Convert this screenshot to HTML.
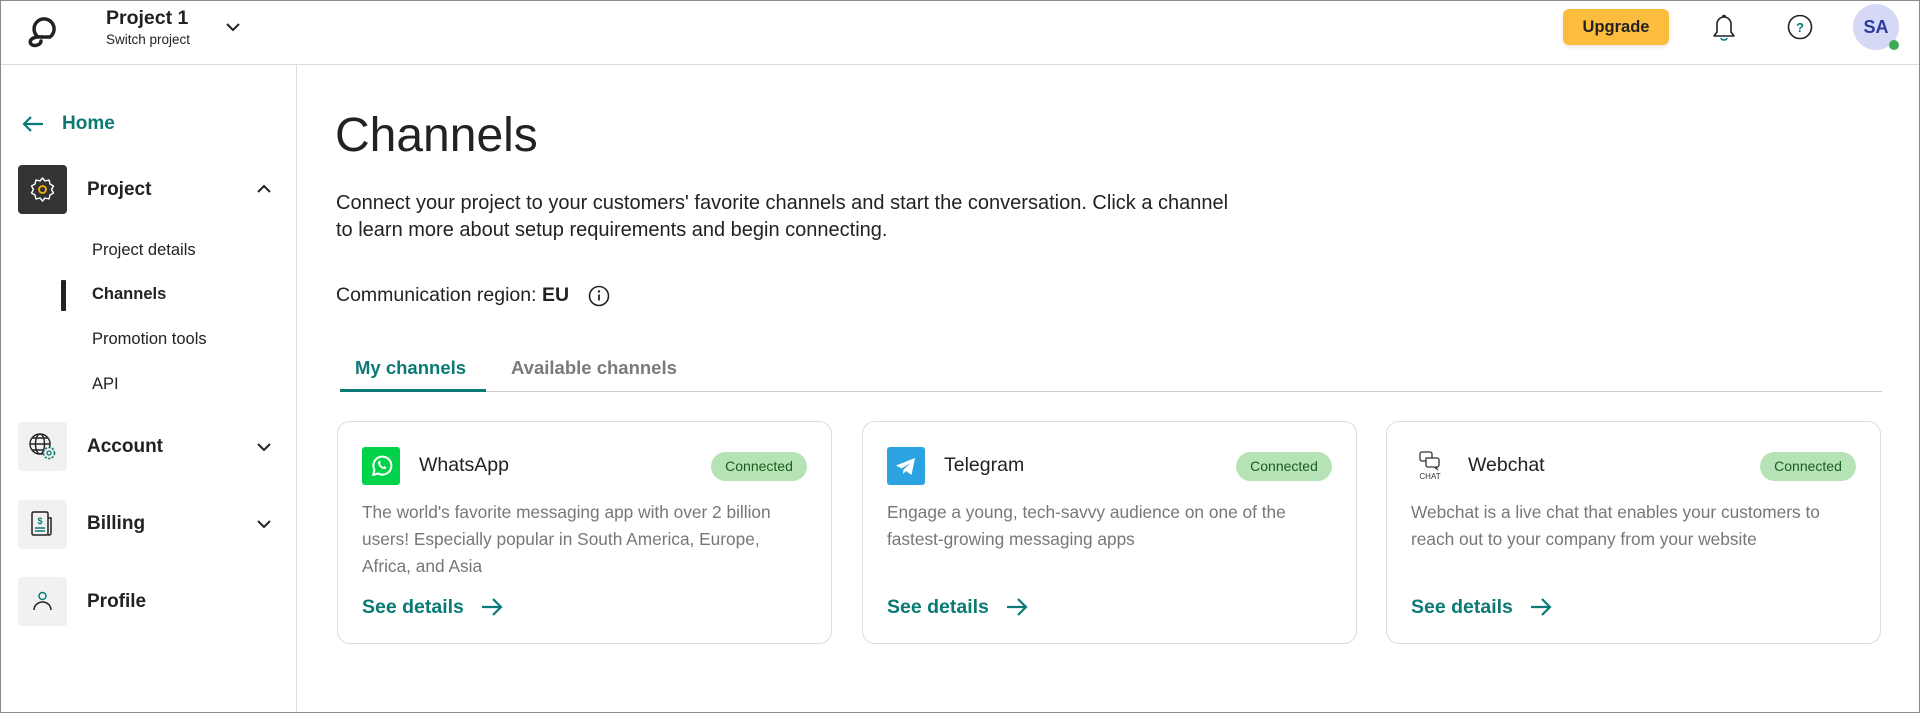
<!DOCTYPE html>
<html><head><meta charset="utf-8"><style>
*{box-sizing:border-box;margin:0;padding:0}
body{width:1920px;height:713px;overflow:hidden;font-family:"Liberation Sans",sans-serif;color:#222;background:#fff;position:relative}
.frame{position:absolute;inset:0;border:1px solid #8a8a8a;pointer-events:none;z-index:9}
.abs{position:absolute}
.hdr{position:absolute;left:0;top:0;width:1920px;height:65px;border-bottom:1px solid #ddd}
.side{position:absolute;left:0;top:65px;width:297px;height:648px;border-right:1px solid #ddd}
.nav{position:absolute;left:87px;font-size:19px;font-weight:bold;color:#222}
.box{position:absolute;left:18px;width:49px;height:49px;border-radius:4px;background:#f1f1f1}
.sub{position:absolute;left:92px;font-size:16.5px;color:#222}
.card{position:absolute;top:421px;width:495px;height:223px;border:1px solid #dcdcdc;border-radius:13px}
.card .ic{position:absolute;left:24px;top:25px;width:38px;height:38px;border-radius:3px}
.card .t{position:absolute;left:81px;top:32px;font-size:19.5px;color:#222}
.card .b{position:absolute;right:24px;top:30px;width:96px;height:29px;border-radius:15px;background:#b5e3b5;color:#1b5e20;font-size:14px;text-align:center;line-height:29px}
.card .d{position:absolute;left:24px;top:77px;font-size:17.3px;line-height:27px;color:#777;white-space:nowrap}
.card .s{position:absolute;left:24px;top:174px;font-size:19.5px;font-weight:bold;color:#0b7a75}
.card .s svg{position:absolute;left:119px;top:1px}
</style></head><body>
<div class="frame"></div>
<div class="hdr">
 <svg class="abs" style="left:24px;top:10px" width="40" height="38" viewBox="0 0 40 38"><path d="M13 26 A10 10 0 1 1 26 27 L18 27" fill="none" stroke="#222" stroke-width="3.5" stroke-linecap="round"/><path d="M18 27 C10 26 4 30 7 34 C10 37 17 35 17 31" fill="none" stroke="#222" stroke-width="3.5" stroke-linecap="round"/></svg>
 <div class="abs" style="left:106px;top:7px;font-size:19.5px;font-weight:bold">Project 1</div>
 <div class="abs" style="left:106px;top:32px;font-size:13.5px">Switch project</div>
 <svg class="abs" style="left:225px;top:21px" width="16" height="12" viewBox="0 0 16 12"><path d="M2 3l6 6 6-6" fill="none" stroke="#222" stroke-width="2"/></svg>
 <div class="abs" style="left:1563px;top:9px;width:106px;height:36px;border-radius:6px;background:#fbbd3b;font-size:16.5px;font-weight:bold;text-align:center;line-height:36px;box-shadow:0 2px 4px rgba(0,0,0,.1)">Upgrade</div>
 <svg class="abs" style="left:1710px;top:12px" width="28" height="30" viewBox="0 0 28 30"><path d="M4 24h20l-3-4v-8a7 7 0 0 0-14 0v8z" fill="none" stroke="#222" stroke-width="1.6" stroke-linejoin="round"/><path d="M11 26a3 2 0 0 0 6 0" fill="none" stroke="#0b7a75" stroke-width="1.6"/><path d="M12.5 5a1.5 1.5 0 0 1 3 0" fill="none" stroke="#222" stroke-width="1.6"/></svg>
 <svg class="abs" style="left:1787px;top:14px" width="26" height="26" viewBox="0 0 26 26"><circle cx="13" cy="13" r="11.5" fill="none" stroke="#222" stroke-width="1.6"/><text x="13" y="18" text-anchor="middle" font-size="13" font-weight="bold" fill="#0b7a75" font-family="Liberation Sans">?</text></svg>
 <div class="abs" style="left:1853px;top:4px;width:46px;height:46px;border-radius:50%;background:#d5d9f5;color:#2a3a9c;font-size:18px;font-weight:bold;text-align:center;line-height:46px">SA</div>
 <div class="abs" style="left:1889px;top:40px;width:10px;height:10px;border-radius:50%;background:#3dab55"></div>
</div>
<div class="side">
 <svg class="abs" style="left:22px;top:50px" width="22" height="18" viewBox="0 0 22 18"><path d="M21 9H2M9 2L2 9l7 7" fill="none" stroke="#0b7a75" stroke-width="2.2"/></svg>
 <div class="abs" style="left:62px;top:48px;font-size:19px;font-weight:bold;color:#0b7a75">Home</div>
 <div class="box" style="top:100px;background:#333"><svg width="49" height="49" viewBox="0 0 49 49"><path d="M24.5 13l2.5 3 4-1 1 4 3.5 2-2 3.5 2 3.5-3.5 2-1 4-4-1-2.5 3-2.5-3-4 1-1-4-3.5-2 2-3.5-2-3.5 3.5-2 1-4 4 1z" fill="none" stroke="#fff" stroke-width="1.4" stroke-linejoin="round"/><circle cx="24.5" cy="24.5" r="3.5" fill="none" stroke="#f4b400" stroke-width="1.8"/></svg></div>
 <div class="nav" style="top:114px">Project</div>
 <svg class="abs" style="left:256px;top:118px" width="16" height="12" viewBox="0 0 16 12"><path d="M2 9l6-6 6 6" fill="none" stroke="#222" stroke-width="2"/></svg>
 <div class="sub" style="top:176px">Project details</div>
 <div class="abs" style="left:61px;top:215px;width:5px;height:31px;background:#222;border-radius:1px"></div>
 <div class="sub" style="top:220px;font-weight:bold">Channels</div>
 <div class="sub" style="top:265px">Promotion tools</div>
 <div class="sub" style="top:310px">API</div>
 <div class="box" style="top:357px"><svg width="49" height="49" viewBox="0 0 49 49"><circle cx="22" cy="22" r="10" fill="none" stroke="#222" stroke-width="1.4"/><ellipse cx="22" cy="22" rx="4.5" ry="10" fill="none" stroke="#222" stroke-width="1.4"/><path d="M12 22h20M14 16h16M14 28h12" stroke="#222" stroke-width="1.4"/><circle cx="31" cy="31" r="5.5" fill="#f1f1f1" stroke="#0b7a75" stroke-width="1.6" stroke-dasharray="2.2 1.4"/><circle cx="31" cy="31" r="2" fill="none" stroke="#0b7a75" stroke-width="1.3"/></svg></div>
 <div class="nav" style="top:371px">Account</div>
 <svg class="abs" style="left:256px;top:376px" width="16" height="12" viewBox="0 0 16 12"><path d="M2 3l6 6 6-6" fill="none" stroke="#222" stroke-width="2"/></svg>
 <div class="box" style="top:435px"><svg width="49" height="49" viewBox="0 0 49 49"><rect x="14" y="12" width="16" height="23" rx="1.5" fill="none" stroke="#222" stroke-width="1.5"/><path d="M30 18h3v15a2 2 0 0 1-2 2h-1" fill="none" stroke="#222" stroke-width="1.5"/><text x="22" y="24" text-anchor="middle" font-size="9" font-weight="bold" fill="#0b7a75" font-family="Liberation Sans">$</text><path d="M17 28h10M17 31h10" stroke="#0b7a75" stroke-width="1.4"/></svg></div>
 <div class="nav" style="top:448px">Billing</div>
 <svg class="abs" style="left:256px;top:453px" width="16" height="12" viewBox="0 0 16 12"><path d="M2 3l6 6 6-6" fill="none" stroke="#222" stroke-width="2"/></svg>
 <div class="box" style="top:512px"><svg width="49" height="49" viewBox="0 0 49 49"><circle cx="24.5" cy="19" r="3.5" fill="none" stroke="#0b7a75" stroke-width="1.5"/><path d="M16 33a8.5 8 0 0 1 17 0" fill="none" stroke="#222" stroke-width="1.5"/></svg></div>
 <div class="nav" style="top:526px">Profile</div>
</div>
<div class="abs" style="left:335px;top:108px;font-size:48px;color:#222">Channels</div>
<div class="abs" style="left:336px;top:190px;font-size:20px;line-height:27px;white-space:nowrap;color:#222">Connect your project to your customers' favorite channels and start the conversation. Click a channel<br>to learn more about setup requirements and begin connecting.</div>
<div class="abs" style="left:336px;top:284px;font-size:19.5px;color:#222">Communication region: <b>EU</b></div>
<svg class="abs" style="left:588px;top:285px" width="22" height="22" viewBox="0 0 22 22"><circle cx="11" cy="11" r="9.5" fill="none" stroke="#222" stroke-width="1.6"/><circle cx="11" cy="6.5" r="1.2" fill="#222"/><path d="M11 9.5v6" stroke="#222" stroke-width="1.8"/></svg>
<div class="abs" style="left:355px;top:357px;font-size:18.5px;font-weight:bold;color:#0b7a75">My channels</div>
<div class="abs" style="left:511px;top:357px;font-size:18.5px;font-weight:bold;color:#7a7a7a">Available channels</div>
<div class="abs" style="left:340px;top:391px;width:1542px;height:1px;background:#ccc"></div>
<div class="abs" style="left:340px;top:389px;width:146px;height:3px;background:#0b7a75"></div>

<div class="card" style="left:337px">
 <div class="ic" style="background:#00d34a"><svg width="38" height="38" viewBox="0 0 38 38"><path d="M11 28l1.5-5a9 9 0 1 1 3.5 3.5z" fill="none" stroke="#fff" stroke-width="2" stroke-linejoin="round"/><path d="M16 15c0 4 3 7 7 7l1.5-1.5-2-1.5-1 1c-1.5-.5-3-2-3.5-3.5l1-1-1.5-2z" fill="#fff"/></svg></div>
 <div class="t">WhatsApp</div><div class="b">Connected</div>
 <div class="d">The world's favorite messaging app with over 2 billion<br>users! Especially popular in South America, Europe,<br>Africa, and Asia</div>
 <div class="s">See details<svg width="22" height="20" viewBox="0 0 22 20"><path d="M1 10h19M12 2l8 8-8 8" fill="none" stroke="#0b7a75" stroke-width="2.2"/></svg></div>
</div>
<div class="card" style="left:862px">
 <div class="ic" style="background:#2aa3e0"><svg width="38" height="38" viewBox="0 0 38 38"><path d="M9 18.5l19-7.5-3.5 17-5.5-4-3 3 .5-4.5 7-6.5-9 5.5z" fill="#fff"/></svg></div>
 <div class="t">Telegram</div><div class="b">Connected</div>
 <div class="d">Engage a young, tech-savvy audience on one of the<br>fastest-growing messaging apps</div>
 <div class="s">See details<svg width="22" height="20" viewBox="0 0 22 20"><path d="M1 10h19M12 2l8 8-8 8" fill="none" stroke="#0b7a75" stroke-width="2.2"/></svg></div>
</div>
<div class="card" style="left:1386px">
 <div class="ic"><svg width="38" height="38" viewBox="0 0 38 38"><rect x="9" y="5" width="12" height="9" rx="2" fill="none" stroke="#333" stroke-width="1.3"/><path d="M15 11h11a2 2 0 0 1 2 2v5a2 2 0 0 1-2 2h-1l1 2-3-2h-6a2 2 0 0 1-2-2z" fill="#fff" stroke="#333" stroke-width="1.3"/><text x="19" y="32" text-anchor="middle" font-size="8" fill="#333" font-family="Liberation Sans">CHAT</text></svg></div>
 <div class="t">Webchat</div><div class="b">Connected</div>
 <div class="d">Webchat is a live chat that enables your customers to<br>reach out to your company from your website</div>
 <div class="s">See details<svg width="22" height="20" viewBox="0 0 22 20"><path d="M1 10h19M12 2l8 8-8 8" fill="none" stroke="#0b7a75" stroke-width="2.2"/></svg></div>
</div>
</body></html>
